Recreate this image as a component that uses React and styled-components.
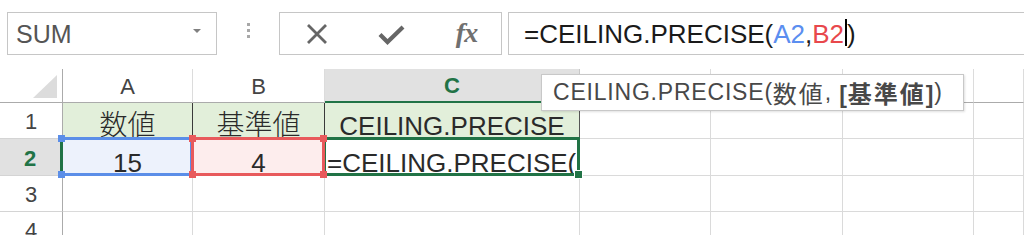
import React from "react";
import styled, { createGlobalStyle } from "styled-components";

const Global = createGlobalStyle`
  html, body { margin: 0; padding: 0; background: #fff; }
  body { width: 1024px; height: 235px; overflow: hidden; font-family: "Liberation Sans", Arial, sans-serif; }
`;

const GREEN = "#217346";
const BLUE = "#5b8ee8";
const RED = "#e85a5c";
const GRID = "#dadada";

const Page = styled.div`
  position: relative;
  width: 1024px;
  height: 235px;
  overflow: hidden;
`;

const Toolbar = styled.div`
  display: flex;
  align-items: stretch;
  height: 43px;
  padding: 12px 0 0 7px;
`;

const NameBox = styled.div`
  box-sizing: border-box;
  width: 210px;
  border: 1px solid #c6c6c6;
  display: flex;
  align-items: center;
  justify-content: space-between;
  padding: 1px 15px 0 8px;
  font-size: 25px;
  color: #555;
`;

const DropArrow = styled.span`
  width: 0;
  height: 0;
  border-left: 4px solid transparent;
  border-right: 4px solid transparent;
  border-top: 4px solid #808080;
  margin-top: -6px;
`;

const Grip = styled.div`
  width: 62px;
  display: flex;
  flex-direction: column;
  align-items: center;
  justify-content: center;
  gap: 3px;
  padding-bottom: 6px;
  box-sizing: border-box;
`;

const GripDot = styled.span`
  width: 3px;
  height: 3px;
  background: #a8a8a8;
`;

const ButtonBox = styled.div`
  box-sizing: border-box;
  width: 223px;
  border: 1px solid #c6c6c6;
  display: flex;
  align-items: center;
  padding-left: 23px;
  gap: 48px;
`;

const IconSlot = styled.span`
  width: 27px;
  height: 27px;
  display: flex;
  align-items: center;
  justify-content: center;
`;

const Fx = styled.span`
  font-family: "Liberation Serif", "Times New Roman", serif;
  font-style: italic;
  font-weight: bold;
  font-size: 28px;
  color: #707070;
  letter-spacing: -1px;
  margin-top: -1px;
`;

const FormulaBox = styled.div`
  box-sizing: border-box;
  flex: 1;
  margin-left: 6px;
  margin-right: -6px;
  border: 1px solid #c6c6c6;
  display: flex;
  align-items: center;
  padding: 2px 0 0 15px;
  font-size: 26px;
  color: #1a1a1a;
  white-space: pre;
`;

const Ref = styled.span`
  color: ${(p) => p.color};
`;

const Caret = styled.span`
  display: inline-block;
  width: 2px;
  height: 27px;
  background: #000;
  vertical-align: middle;
  margin: -4px 0 0 1px;
`;

const Sheet = styled.div`
  margin-top: 14px;
  display: grid;
  grid-template-columns: 63px 130px 132px 255px 131px 132px 131px 1fr;
  grid-template-rows: 34px 36px 37px 36px 36px;
`;

const Corner = styled.div`
  box-sizing: border-box;
  border-right: 1px solid #ababab;
  border-bottom: 1px solid #ababab;
  display: flex;
  justify-content: flex-end;
  align-items: flex-end;
  padding: 0 5px 4px 0;
`;

const Triangle = styled.span`
  width: 0;
  height: 0;
  border-left: 24px solid transparent;
  border-bottom: 23px solid #dcdcdc;
`;

const ColHeader = styled.div`
  box-sizing: border-box;
  display: flex;
  align-items: center;
  justify-content: center;
  font-size: 22px;
  padding-top: 2px;
  color: ${(p) => (p.selected ? GREEN : "#444")};
  font-weight: ${(p) => (p.selected ? "bold" : "normal")};
  background: ${(p) => (p.selected ? "#e1e1e1" : "#fff")};
  border-right: 1px solid ${(p) => (p.selected ? "#c8c8c8" : "#dcdcdc")};
  border-bottom: ${(p) => (p.selected ? `2px solid ${GREEN}` : "1px solid #ababab")};
`;

const RowHeader = styled.div`
  box-sizing: border-box;
  display: flex;
  align-items: center;
  justify-content: center;
  font-size: 22px;
  padding-top: 3px;
  color: ${(p) => (p.selected ? GREEN : "#444")};
  font-weight: ${(p) => (p.selected ? "bold" : "normal")};
  background: ${(p) => (p.selected ? "#e1e1e1" : "#fff")};
  border-right: ${(p) => (p.selected ? `3px solid ${GREEN}` : "1px solid #ababab")};
  border-bottom: 1px solid #d4d4d4;
`;

const Cell = styled.div`
  box-sizing: border-box;
  position: relative;
  display: flex;
  align-items: flex-end;
  justify-content: ${(p) => (p.left ? "flex-start" : "center")};
  padding-left: ${(p) => (p.left ? "2px" : "0")};
  background: ${(p) => p.fill || "#fff"};
  border-right: 1px solid ${(p) => p.rightColor || GRID};
  border-bottom: 1px solid ${GRID};
  font-family: ${(p) =>
    p.cjk
      ? '"Noto Sans CJK JP", sans-serif'
      : '"Liberation Sans", Arial, "Noto Sans CJK JP", sans-serif'};
  font-size: ${(p) => (p.cjk ? "28px" : "26px")};
  font-weight: ${(p) => (p.cjk ? 300 : 400)};
  line-height: ${(p) => (p.cjk ? "30px" : "24px")};
  color: #2a2a2a;
  white-space: nowrap;
`;

const CellText = styled.span`
  display: block;
  overflow: hidden;
  max-width: 100%;
`;

const Frame = styled.div`
  position: absolute;
  top: -2px;
  left: ${(p) => (p.noLeft ? "0" : "-2px")};
  right: -1px;
  bottom: -1px;
  border: 3px solid ${(p) => p.color};
  border-left-width: ${(p) => (p.noLeft ? "0" : "3px")};
  z-index: ${(p) => p.z || 2};
  pointer-events: none;
`;

const Handle = styled.span`
  position: absolute;
  width: 7px;
  height: 7px;
  background: ${(p) => p.color};
  ${(p) => (p.top ? "top: -5px;" : "bottom: -5px;")}
  ${(p) => (p.lft ? "left: -5px;" : "right: -5px;")}
`;

const FillHandle = styled.span`
  position: absolute;
  right: -6px;
  bottom: -6px;
  width: 7px;
  height: 7px;
  background: ${GREEN};
  border: 1px solid #fff;
`;

const Tooltip = styled.div`
  position: absolute;
  left: 541px;
  top: 74px;
  box-sizing: border-box;
  width: 423px;
  height: 37px;
  background: #fff;
  border: 1px solid #c8c8c8;
  box-shadow: 1px 1px 2px rgba(0, 0, 0, 0.12);
  display: flex;
  align-items: center;
  padding: 0 0 1px 11px;
  font-size: 23px;
  letter-spacing: 0.8px;
  color: #484848;
  white-space: pre;
  z-index: 10;
`;

const Jp = styled.span`
  font-family: "Noto Sans CJK JP", sans-serif;
  font-size: 24px;
  letter-spacing: 2px;
  font-weight: ${(p) => (p.bold ? "bold" : "normal")};
`;

const Bold = styled.span`
  font-weight: bold;
`;

const XIcon = () => (
  <svg width="24" height="24" viewBox="0 0 24 24">
    <path d="M3 3 L21 21 M21 3 L3 21" stroke="#666" strokeWidth="2.8" fill="none" />
  </svg>
);

const CheckIcon = () => (
  <svg width="27" height="24" viewBox="0 0 27 24">
    <path d="M2 12.5 L9.5 20 L25 5" stroke="#666" strokeWidth="4.2" fill="none" strokeLinejoin="miter" />
  </svg>
);

const Frames = ({ color, z, noLeft, corners }) => (
  <Frame color={color} z={z} noLeft={noLeft}>
    {corners.map((c) => (
      <Handle key={c} color={color} top={c.includes("t")} lft={c.includes("l")} />
    ))}
  </Frame>
);

const EmptyCells = ({ n }) =>
  Array.from({ length: n }, (_, i) => <Cell key={i} />);

export default function App() {
  const cols = ["A", "B", "C", "D", "E", "F", "G"];
  return (
    <Page>
      <Global />
      <Toolbar>
        <NameBox>
          <span>SUM</span>
          <DropArrow />
        </NameBox>
        <Grip>
          <GripDot />
          <GripDot />
          <GripDot />
        </Grip>
        <ButtonBox>
          <IconSlot>
            <XIcon />
          </IconSlot>
          <IconSlot>
            <CheckIcon />
          </IconSlot>
          <IconSlot>
            <Fx>fx</Fx>
          </IconSlot>
        </ButtonBox>
        <FormulaBox>
          =CEILING.PRECISE(<Ref color="#5b8ef0">A2</Ref>,<Ref color="#e8484c">B2</Ref>
          <Caret />)
        </FormulaBox>
      </Toolbar>

      <Sheet>
        <Corner>
          <Triangle />
        </Corner>
        {cols.map((c) => (
          <ColHeader key={c} selected={c === "C"}>
            {c === "G" ? "" : c}
          </ColHeader>
        ))}

        <RowHeader>1</RowHeader>
        <Cell cjk fill="#e2efda" rightColor="#3a3a3a">数値</Cell>
        <Cell cjk fill="#e2efda" rightColor="#3a3a3a">基準値</Cell>
        <Cell fill="#e2efda" rightColor="#555">CEILING.PRECISE</Cell>
        <EmptyCells n={4} />

        <RowHeader selected>2</RowHeader>
        <Cell fill="#edf2fc">
          15
          <Frames color={BLUE} z={2} noLeft corners={["tl", "bl"]} />
        </Cell>
        <Cell fill="#fdeded">
          4
          <Frames color={RED} z={4} corners={["tl", "tr", "bl", "br"]} />
        </Cell>
        <Cell left>
          <CellText>=CEILING.PRECISE(</CellText>
          <Frame color={GREEN} z={3}>
            <FillHandle />
          </Frame>
        </Cell>
        <EmptyCells n={4} />

        <RowHeader>3</RowHeader>
        <EmptyCells n={7} />

        <RowHeader>4</RowHeader>
        <EmptyCells n={7} />
      </Sheet>

      <Tooltip>
        CEILING.PRECISE(<Jp>数値</Jp>, <Bold>[<Jp bold>基準値</Jp>]</Bold>)
      </Tooltip>
    </Page>
  );
}
